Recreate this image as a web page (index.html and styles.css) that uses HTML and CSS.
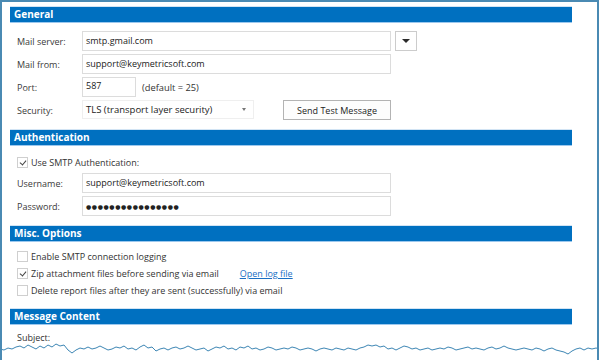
FILE: index.html
```html
<!DOCTYPE html>
<html>
<head>
<meta charset="utf-8">
<link rel="stylesheet" href="styles.css">
</head>
<body>
<div class="panel">
  <section class="sec">
    <div class="hdr">General</div>
    <div class="row first">
      <span class="lbl">Mail server:</span>
      <div class="field wide">smtp.gmail.com</div>
      <div class="ddbtn"><span class="tri"></span></div>
    </div>
    <div class="row">
      <span class="lbl">Mail from:</span>
      <div class="field wide">support@keymetricsoft.com</div>
    </div>
    <div class="row">
      <span class="lbl">Port:</span>
      <div class="field port">587</div>
      <span class="note">(default = 25)</span>
    </div>
    <div class="row">
      <span class="lbl">Security:</span>
      <div class="combo"><span>TLS (transport layer security)</span><span class="tri small"></span></div>
      <div class="btn">Send Test Message</div>
    </div>
  </section>

  <section class="sec">
    <div class="hdr">Authentication</div>
    <div class="check first-check">
      <span class="box checked"></span><span>Use SMTP Authentication:</span>
    </div>
    <div class="row tight">
      <span class="lbl">Username:</span>
      <div class="field wide">support@keymetricsoft.com</div>
    </div>
    <div class="row">
      <span class="lbl">Password:</span>
      <div class="field wide pwd">●●●●●●●●●●●●●●●●</div>
    </div>
  </section>

  <section class="sec">
    <div class="hdr">Misc. Options</div>
    <div class="checks">
      <div class="check"><span class="box"></span><span>Enable SMTP connection logging</span></div>
      <div class="check"><span class="box checked"></span><span>Zip attachment files before sending via email</span><a class="link">Open log file</a></div>
      <div class="check"><span class="box"></span><span>Delete report files after they are sent (successfully) via email</span></div>
    </div>
  </section>

  <section class="sec">
    <div class="hdr">Message Content</div>
    <div class="subject">Subject:</div>
  </section>

  <svg class="torn" width="600" height="20" viewBox="0 0 600 20">
    <path class="fill" d="M0,9 L4,10 L8,8 L12,9 L16,7 L20,6 L24,8 L28,5 L32,7 L36,9 L40,6 L44,8 L48,5 L52,7 L56,4 L60,6 L64,5 L68,10 L72,13 L76,10 L80,8 L84,9 L88,7 L92,9 L96,8 L100,6 L104,8 L108,10 L112,9 L116,7 L120,8 L124,6 L128,9 L132,8 L136,10 L140,7 L144,5 L148,8 L152,7 L156,11 L160,9 L164,8 L168,10 L172,8 L176,7 L180,9 L184,8 L188,6 L192,8 L196,10 L200,9 L204,8 L208,11 L212,9 L216,7 L220,8 L224,6 L228,9 L232,8 L236,10 L240,7 L244,8 L248,6 L252,9 L256,8 L260,10 L264,9 L268,7 L272,8 L276,10 L280,9 L284,8 L288,9 L292,7 L296,8 L300,10 L304,9 L308,8 L312,9 L316,11 L320,9 L324,8 L328,9 L332,10 L336,8 L340,9 L344,10 L348,8 L352,9 L356,10 L360,8 L364,7 L368,5 L372,6 L376,5 L380,7 L384,6 L388,9 L392,8 L396,10 L400,8 L404,6 L408,7 L412,9 L416,8 L420,10 L424,9 L428,8 L432,10 L436,9 L440,8 L444,9 L448,7 L452,8 L456,10 L460,9 L464,8 L468,7 L472,9 L476,8 L480,9 L484,10 L488,8 L492,7 L496,9 L500,8 L504,6 L508,8 L512,9 L516,10 L520,9 L524,8 L528,9 L532,10 L536,8 L540,9 L544,11 L548,9 L552,8 L556,10 L560,11 L564,12 L568,14 L572,11 L576,9 L580,8 L584,10 L588,8 L592,9 L596,8 L600,9 L600,20 L0,20 Z"/>
    <path class="line" d="M0,9 L4,10 L8,8 L12,9 L16,7 L20,6 L24,8 L28,5 L32,7 L36,9 L40,6 L44,8 L48,5 L52,7 L56,4 L60,6 L64,5 L68,10 L72,13 L76,10 L80,8 L84,9 L88,7 L92,9 L96,8 L100,6 L104,8 L108,10 L112,9 L116,7 L120,8 L124,6 L128,9 L132,8 L136,10 L140,7 L144,5 L148,8 L152,7 L156,11 L160,9 L164,8 L168,10 L172,8 L176,7 L180,9 L184,8 L188,6 L192,8 L196,10 L200,9 L204,8 L208,11 L212,9 L216,7 L220,8 L224,6 L228,9 L232,8 L236,10 L240,7 L244,8 L248,6 L252,9 L256,8 L260,10 L264,9 L268,7 L272,8 L276,10 L280,9 L284,8 L288,9 L292,7 L296,8 L300,10 L304,9 L308,8 L312,9 L316,11 L320,9 L324,8 L328,9 L332,10 L336,8 L340,9 L344,10 L348,8 L352,9 L356,10 L360,8 L364,7 L368,5 L372,6 L376,5 L380,7 L384,6 L388,9 L392,8 L396,10 L400,8 L404,6 L408,7 L412,9 L416,8 L420,10 L424,9 L428,8 L432,10 L436,9 L440,8 L444,9 L448,7 L452,8 L456,10 L460,9 L464,8 L468,7 L472,9 L476,8 L480,9 L484,10 L488,8 L492,7 L496,9 L500,8 L504,6 L508,8 L512,9 L516,10 L520,9 L524,8 L528,9 L532,10 L536,8 L540,9 L544,11 L548,9 L552,8 L556,10 L560,11 L564,12 L568,14 L572,11 L576,9 L580,8 L584,10 L588,8 L592,9 L596,8 L600,9"/>
  </svg>
</div>
</body>
</html>
```

FILE: styles.css
```css
* { box-sizing: border-box; }
html, body { margin: 0; padding: 0; background: #ffffff; }
body {
  font-family: "Open Sans", "Noto Sans", "Liberation Sans", sans-serif;
  font-size: 9px;
  color: #333333;
}
.panel {
  position: relative;
  width: 599px;
  height: 360px;
  border: 2px solid #4a8ab3;
  border-bottom: none;
  padding: 4px 0 0 8px;
  overflow: hidden;
}
.sec { width: 562px; }
.hdr {
  height: 17px;
  background: #0070c0;
  border-top: 1px solid #d2e4f4;
  border-bottom: 1px solid #9cc8ee;
  color: #ffffff;
  font-weight: 700;
  font-size: 10px;
  line-height: 15px;
  padding-left: 4px;
}
.sec + .sec .hdr { margin-top: 9px; }
.row {
  display: flex;
  align-items: center;
  height: 20px;
  margin-top: 3px;
  padding-left: 7px;
}
.row.first { margin-top: 8px; }
.lbl { width: 65px; flex: none; color: #3a3a3a; }
.field {
  height: 20px;
  border: 1px solid #dcdcdc;
  padding: 1px 3px 0;
  line-height: 15px;
  color: #222222;
  flex: none;
}
.wide { width: 309px; }
.port { width: 54px; line-height: 13px; }
.note { margin-left: 6px; font-size: 9.3px; }
.pwd { font-family: "DejaVu Sans", sans-serif; font-size: 6px; letter-spacing: 0.6px; line-height: 17px; }
.ddbtn {
  width: 22px;
  height: 20px;
  margin-left: 4px;
  border: 1px solid #cccccc;
  display: flex;
  align-items: center;
  justify-content: center;
}
.tri {
  width: 0; height: 0;
  border-left: 4px solid transparent;
  border-right: 4px solid transparent;
  border-top: 4px solid #2a2a2a;
}
.tri.small {
  border-left-width: 2.5px;
  border-right-width: 2.5px;
  border-top: 3px solid #777777;
  margin-right: 7px;
}
.combo {
  width: 172px;
  height: 19px;
  align-self: flex-start;
  border: 1px solid #efefef;
  padding: 0 0 0 3px;
  display: flex;
  align-items: center;
  justify-content: space-between;
  font-size: 9.5px;
  color: #222222;
}
.btn {
  width: 108px;
  height: 20px;
  margin-left: 29px;
  border: 1px solid #b3b3b3;
  background: #fdfdfd;
  display: flex;
  align-items: center;
  justify-content: center;
  color: #222222;
}
.check {
  display: flex;
  align-items: center;
  height: 17px;
  padding-left: 7px;
}
.first-check { margin-top: 8px; height: 16px; }
.row.tight { margin-top: 3px; }
.checks { margin-top: 6px; }
.box {
  width: 11px;
  height: 11px;
  border: 1px solid #cfcfcf;
  margin-right: 3px;
  flex: none;
  position: relative;
}
.box.checked::after {
  content: "";
  position: absolute;
  left: 2.5px;
  top: 1px;
  width: 3px;
  height: 5px;
  border-right: 1px solid #444444;
  border-bottom: 1px solid #444444;
  transform: rotate(40deg);
}
.link {
  margin-left: 21px;
  color: #1a6fc4;
  text-decoration: underline;
}
.subject {
  padding-left: 7px;
  margin-top: 5px;
  height: 16px;
  line-height: 16px;
}
.torn {
  position: absolute;
  left: -2px;
  bottom: 0;
  display: block;
}
.torn .fill { fill: #ffffff; }
.torn .line { fill: none; stroke: #3d86b4; stroke-width: 1; }
```
